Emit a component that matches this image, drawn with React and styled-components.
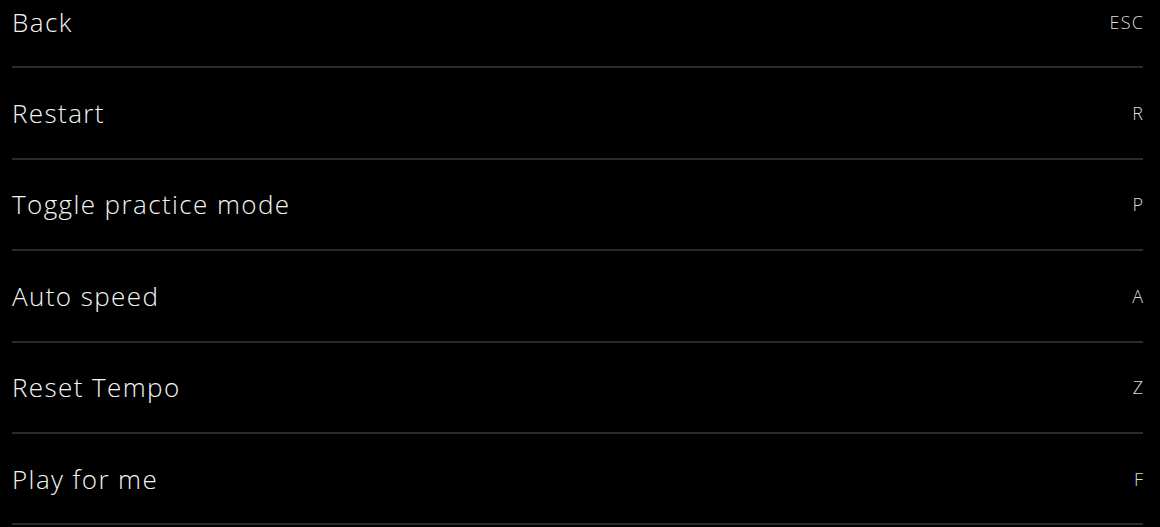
import React from "react";
import styled, { createGlobalStyle } from "styled-components";

const Global = createGlobalStyle`
  html, body { margin: 0; padding: 0; background: #000; overflow: hidden; }
  body { font-family: "Open Sans", "Liberation Sans", sans-serif; }
`;

const List = styled.div`
  display: flex;
  flex-direction: column;
  margin: -23px 17px 0 12px;
`;

const Row = styled.div`
  display: flex;
  align-items: center;
  justify-content: space-between;
  height: 89.4px;
  border-bottom: 2px solid #2a2930;
`;

const Label = styled.span`
  color: #f4f4f4;
  font-size: 26px;
  font-weight: 300;
  letter-spacing: 1.4px;
`;

const Key = styled.span`
  color: #dcdcdc;
  font-size: 18px;
  font-weight: 300;
  letter-spacing: 1.3px;
  margin-right: -1.3px;
`;

const items = [
  ["Back", "ESC"],
  ["Restart", "R"],
  ["Toggle practice mode", "P"],
  ["Auto speed", "A"],
  ["Reset Tempo", "Z"],
  ["Play for me", "F"],
];

export default function App() {
  return (
    <>
      <Global />
      <List>
        {items.map(([l, k]) => (
          <Row key={l}>
            <Label>{l}</Label>
            <Key>{k}</Key>
          </Row>
        ))}
      </List>
    </>
  );
}
